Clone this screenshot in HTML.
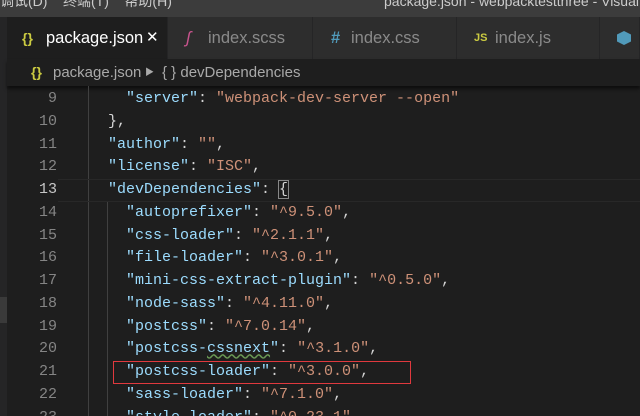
<!DOCTYPE html>
<html style="width:640px;height:416px;overflow:hidden"><head><meta charset="utf-8"><style>
*{margin:0;padding:0;box-sizing:border-box}
body{width:640px;height:416px;overflow:hidden;background:#1e1e1e;font-family:"Segoe UI","Liberation Sans","Noto Sans CJK SC",sans-serif;position:relative}
.title{position:absolute;left:0;top:0;width:640px;height:17px;background:#3c3c3c;color:#ccc;font-size:14px;line-height:8px;overflow:hidden}
.tabs{position:absolute;left:0;top:17px;width:640px;height:42px;background:#252526}
.tab{position:absolute;top:0;height:42px;background:#2d2d2d;border-right:1px solid #252526;color:#8a8a8a;font-size:16.5px;line-height:42px;white-space:nowrap;overflow:hidden}
.tab.active{background:#1e1e1e;color:#fff}
.ic{display:inline-block;font-weight:bold}
.bc{position:absolute;left:7px;top:59px;width:633px;height:27px;background:#1e1e1e;color:#a9a9a9;font-size:15px;line-height:27px;box-shadow:0 3px 3px #0008}
.left{position:absolute;left:0;top:17px;width:7px;height:399px;background:#252526}
.thumb{position:absolute;left:0;top:297px;width:7px;height:26px;background:#3a3a3a}
.code{position:absolute;left:7px;top:88px;width:633px;height:328px;overflow:hidden;font-family:"Liberation Mono",monospace;font-size:15px}
.ln{position:absolute;left:0;width:50px;text-align:right;color:#858585;height:22.75px;line-height:22.75px}
.l{position:absolute;left:0;white-space:pre;color:#d4d4d4;height:22.75px;line-height:22.75px}
.k{color:#9cdcfe}.s{color:#ce9178}
.g{position:absolute;width:1px;background:#404040}
</style></head><body>
<div class="title"><span style="position:absolute;left:0;top:-3px">调试(D)&nbsp;&nbsp;&nbsp;&nbsp;终端(T)&nbsp;&nbsp;&nbsp;&nbsp;帮助(H)</span><span style="position:absolute;left:384px;top:-3px">package.json - webpacktestthree - Visual</span></div>
<div class="tabs">
<div class="tab active" style="left:7px;width:161px"><span class="ic" style="position:absolute;left:15px;color:#cbcb41;font-size:14px">{}</span><span style="position:absolute;left:39px">package.json</span><span style="position:absolute;left:139px;font-size:15px">✕</span></div>
<div class="tab" style="left:168px;width:145px"><span style="position:absolute;left:18px;color:#c6538c;font-style:italic;font-size:17px">ʃ</span><span style="position:absolute;left:40px">index.scss</span></div>
<div class="tab" style="left:313px;width:144px"><span class="ic" style="position:absolute;left:18px;color:#519aba">#</span><span style="position:absolute;left:38px">index.css</span></div>
<div class="tab" style="left:457px;width:143px"><span class="ic" style="position:absolute;left:17px;color:#cbcb41;font-size:11px">JS</span><span style="position:absolute;left:38px">index.js</span></div>
<div class="tab" style="left:600px;width:40px"><span style="position:absolute;left:17px;top:14px;width:14px;height:14px;background:#519aba;clip-path:polygon(50% 0,100% 25%,100% 75%,50% 100%,0 75%,0 25%)"></span></div>
</div>
<div class="left"></div><div class="thumb"></div>
<div class="bc"><span class="ic" style="position:absolute;left:24px;color:#cbcb41;font-size:14px">{}</span><span style="position:absolute;left:46px">package.json</span><span style="position:absolute;left:138px;font-size:9px;color:#aaa">▶</span><span style="position:absolute;left:155px">{ } devDependencies</span></div>
<div class="g" style="left:88px;top:86px;height:330px"></div><div class="g" style="left:107px;top:202px;height:214px"></div>
<div style="position:absolute;left:58px;top:179px;width:582px;height:23px;border-top:1px solid #282828;border-bottom:1px solid #282828"></div>
<div class="code">
<div class="ln" style="top:0">9</div><div class="l" style="left:119px;top:0"><span class="k">"server"</span>: <span class="s">"webpack-dev-server --open"</span></div>
<div class="ln" style="top:22.75px">10</div><div class="l" style="left:101px;top:22.75px">},</div>
<div class="ln" style="top:45.5px">11</div><div class="l" style="left:101px;top:45.5px"><span class="k">"author"</span>: <span class="s">""</span>,</div>
<div class="ln" style="top:68.25px">12</div><div class="l" style="left:101px;top:68.25px"><span class="k">"license"</span>: <span class="s">"ISC"</span>,</div>
<div class="ln" style="top:91px;color:#c6c6c6">13</div><div class="l" style="left:101px;top:91px"><span class="k">"devDependencies"</span>: <span style="outline:1px solid #888">{</span></div>
<div class="ln" style="top:113.75px">14</div><div class="l" style="left:119px;top:113.75px"><span class="k">"autoprefixer"</span>: <span class="s">"^9.5.0"</span>,</div>
<div class="ln" style="top:136.5px">15</div><div class="l" style="left:119px;top:136.5px"><span class="k">"css-loader"</span>: <span class="s">"^2.1.1"</span>,</div>
<div class="ln" style="top:159.25px">16</div><div class="l" style="left:119px;top:159.25px"><span class="k">"file-loader"</span>: <span class="s">"^3.0.1"</span>,</div>
<div class="ln" style="top:182px">17</div><div class="l" style="left:119px;top:182px"><span class="k">"mini-css-extract-plugin"</span>: <span class="s">"^0.5.0"</span>,</div>
<div class="ln" style="top:204.75px">18</div><div class="l" style="left:119px;top:204.75px"><span class="k">"node-sass"</span>: <span class="s">"^4.11.0"</span>,</div>
<div class="ln" style="top:227.5px">19</div><div class="l" style="left:119px;top:227.5px"><span class="k">"postcss"</span>: <span class="s">"^7.0.14"</span>,</div>
<div class="ln" style="top:250.25px">20</div><div class="l" style="left:119px;top:250.25px"><span class="k">"postcss-<span style="text-decoration:underline wavy #6a9955">cssnext</span>"</span>: <span class="s">"^3.1.0"</span>,</div>
<div class="ln" style="top:273px">21</div><div class="l" style="left:119px;top:273px"><span class="k">"postcss-loader"</span>: <span class="s">"^3.0.0"</span>,</div>
<div class="ln" style="top:295.75px">22</div><div class="l" style="left:119px;top:295.75px"><span class="k">"sass-loader"</span>: <span class="s">"^7.1.0"</span>,</div>
<div class="ln" style="top:318.5px">23</div><div class="l" style="left:119px;top:318.5px"><span class="k">"style-loader"</span>: <span class="s">"^0.23.1"</span>,</div>
</div>
<div style="position:absolute;left:113px;top:361px;width:298px;height:23px;border:1px solid #e0393e"></div>
</body></html>
